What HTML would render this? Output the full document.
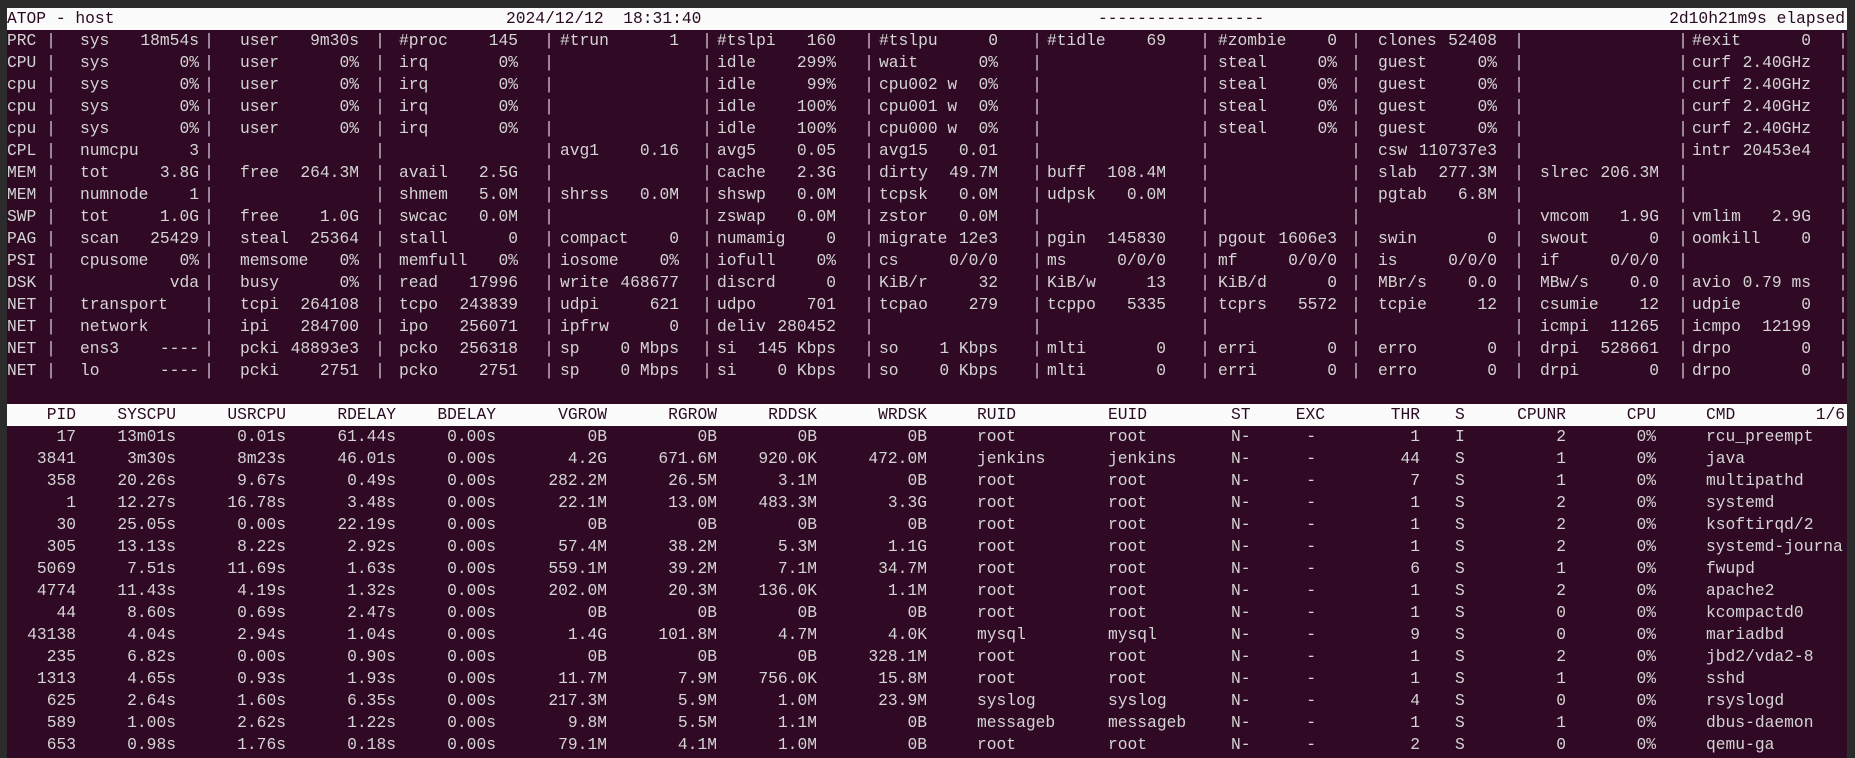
<!DOCTYPE html>
<html><head><meta charset="utf-8">
<style>
html,body{margin:0;padding:0}
body{width:1855px;height:758px;background:#2b2b2b;position:relative;overflow:hidden;font-family:"Liberation Mono","DejaVu Sans Mono",monospace;font-size:16.3px;color:#d4d4d4}
#term{position:absolute;left:7px;top:8px;width:1840px;height:750px;background:#300a24}
.hdr{position:absolute;left:7px;width:1840px;height:22px;background:#fbfbfb;color:#2a0a20;line-height:22px;white-space:pre}
.hdr span{position:absolute;top:0}
.row{position:absolute;left:0;width:1855px;height:22px;line-height:22px;white-space:pre}
.lab{position:absolute;left:7px}
.f{position:absolute;width:119px;display:flex;justify-content:space-between;top:0}
.f b,.f i{font-weight:normal;font-style:normal}
.f0{left:80px}.f1{left:240px}.f2{left:399px}.f3{left:560px}.f4{left:717px}.f5{left:879px}.f6{left:1047px}.f7{left:1218px}.f8{left:1378px}.f9{left:1540px}.f10{left:1692px}
.pipe{position:absolute;top:30px;line-height:22px;white-space:pre;color:#cdbfcb;width:10px;text-align:center}
table{position:absolute;left:7px;top:426px;border-collapse:collapse;table-layout:fixed;width:1848px}
td{padding:0;height:22px;line-height:22px;white-space:pre;overflow:hidden;text-align:right}
td.l{text-align:left}
</style></head><body>
<div id="term"></div>

<div class="hdr" style="top:8px"><span style="left:0">ATOP - host</span><span style="left:499px">2024/12/12  18:31:40</span><span style="left:1091px">-----------------</span><span style="right:2px">2d10h21m9s elapsed</span></div>

<div class="pipe" style="left:46px">|
|
|
|
|
|
|
|
|
|
|
|
|
|
|
|</div>
<div class="pipe" style="left:204px">|
|
|
|
|
|
|
|
|
|
|
|
|
|
|
|</div>
<div class="pipe" style="left:375px">|
|
|
|
|
|
|
|
|
|
|
|
|
|
|
|</div>
<div class="pipe" style="left:544px">|
|
|
|
|
|
|
|
|
|
|
|
|
|
|
|</div>
<div class="pipe" style="left:702px">|
|
|
|
|
|
|
|
|
|
|
|
|
|
|
|</div>
<div class="pipe" style="left:864px">|
|
|
|
|
|
|
|
|
|
|
|
|
|
|
|</div>
<div class="pipe" style="left:1032px">|
|
|
|
|
|
|
|
|
|
|
|
|
|
|
|</div>
<div class="pipe" style="left:1200px">|
|
|
|
|
|
|
|
|
|
|
|
|
|
|
|</div>
<div class="pipe" style="left:1351px">|
|
|
|
|
|
|
|
|
|
|
|
|
|
|
|</div>
<div class="pipe" style="left:1514px">|
|
|
|
|
|
|
|
|
|
|
|
|
|
|
|</div>
<div class="pipe" style="left:1678px">|
|
|
|
|
|
|
|
|
|
|
|
|
|
|
|</div>
<div class="pipe" style="left:1838px">|
|
|
|
|
|
|
|
|
|
|
|
|
|
|
|</div>

<div class="row" style="top:30px"><span class="lab">PRC</span><span class="f f0"><b>sys</b><i>18m54s</i></span><span class="f f1"><b>user</b><i>9m30s</i></span><span class="f f2"><b>#proc</b><i>145</i></span><span class="f f3"><b>#trun</b><i>1</i></span><span class="f f4"><b>#tslpi</b><i>160</i></span><span class="f f5"><b>#tslpu</b><i>0</i></span><span class="f f6"><b>#tidle</b><i>69</i></span><span class="f f7"><b>#zombie</b><i>0</i></span><span class="f f8"><b>clones</b><i>52408</i></span><span class="f f10"><b>#exit</b><i>0</i></span></div>
<div class="row" style="top:52px"><span class="lab">CPU</span><span class="f f0"><b>sys</b><i>0%</i></span><span class="f f1"><b>user</b><i>0%</i></span><span class="f f2"><b>irq</b><i>0%</i></span><span class="f f4"><b>idle</b><i>299%</i></span><span class="f f5"><b>wait</b><i>0%</i></span><span class="f f7"><b>steal</b><i>0%</i></span><span class="f f8"><b>guest</b><i>0%</i></span><span class="f f10"><b>curf</b><i>2.40GHz</i></span></div>
<div class="row" style="top:74px"><span class="lab">cpu</span><span class="f f0"><b>sys</b><i>0%</i></span><span class="f f1"><b>user</b><i>0%</i></span><span class="f f2"><b>irq</b><i>0%</i></span><span class="f f4"><b>idle</b><i>99%</i></span><span class="f f5"><b>cpu002 w</b><i>0%</i></span><span class="f f7"><b>steal</b><i>0%</i></span><span class="f f8"><b>guest</b><i>0%</i></span><span class="f f10"><b>curf</b><i>2.40GHz</i></span></div>
<div class="row" style="top:96px"><span class="lab">cpu</span><span class="f f0"><b>sys</b><i>0%</i></span><span class="f f1"><b>user</b><i>0%</i></span><span class="f f2"><b>irq</b><i>0%</i></span><span class="f f4"><b>idle</b><i>100%</i></span><span class="f f5"><b>cpu001 w</b><i>0%</i></span><span class="f f7"><b>steal</b><i>0%</i></span><span class="f f8"><b>guest</b><i>0%</i></span><span class="f f10"><b>curf</b><i>2.40GHz</i></span></div>
<div class="row" style="top:118px"><span class="lab">cpu</span><span class="f f0"><b>sys</b><i>0%</i></span><span class="f f1"><b>user</b><i>0%</i></span><span class="f f2"><b>irq</b><i>0%</i></span><span class="f f4"><b>idle</b><i>100%</i></span><span class="f f5"><b>cpu000 w</b><i>0%</i></span><span class="f f7"><b>steal</b><i>0%</i></span><span class="f f8"><b>guest</b><i>0%</i></span><span class="f f10"><b>curf</b><i>2.40GHz</i></span></div>
<div class="row" style="top:140px"><span class="lab">CPL</span><span class="f f0"><b>numcpu</b><i>3</i></span><span class="f f3"><b>avg1</b><i>0.16</i></span><span class="f f4"><b>avg5</b><i>0.05</i></span><span class="f f5"><b>avg15</b><i>0.01</i></span><span class="f f8"><b>csw</b><i>110737e3</i></span><span class="f f10"><b>intr</b><i>20453e4</i></span></div>
<div class="row" style="top:162px"><span class="lab">MEM</span><span class="f f0"><b>tot</b><i>3.8G</i></span><span class="f f1"><b>free</b><i>264.3M</i></span><span class="f f2"><b>avail</b><i>2.5G</i></span><span class="f f4"><b>cache</b><i>2.3G</i></span><span class="f f5"><b>dirty</b><i>49.7M</i></span><span class="f f6"><b>buff</b><i>108.4M</i></span><span class="f f8"><b>slab</b><i>277.3M</i></span><span class="f f9"><b>slrec</b><i>206.3M</i></span></div>
<div class="row" style="top:184px"><span class="lab">MEM</span><span class="f f0"><b>numnode</b><i>1</i></span><span class="f f2"><b>shmem</b><i>5.0M</i></span><span class="f f3"><b>shrss</b><i>0.0M</i></span><span class="f f4"><b>shswp</b><i>0.0M</i></span><span class="f f5"><b>tcpsk</b><i>0.0M</i></span><span class="f f6"><b>udpsk</b><i>0.0M</i></span><span class="f f8"><b>pgtab</b><i>6.8M</i></span></div>
<div class="row" style="top:206px"><span class="lab">SWP</span><span class="f f0"><b>tot</b><i>1.0G</i></span><span class="f f1"><b>free</b><i>1.0G</i></span><span class="f f2"><b>swcac</b><i>0.0M</i></span><span class="f f4"><b>zswap</b><i>0.0M</i></span><span class="f f5"><b>zstor</b><i>0.0M</i></span><span class="f f9"><b>vmcom</b><i>1.9G</i></span><span class="f f10"><b>vmlim</b><i>2.9G</i></span></div>
<div class="row" style="top:228px"><span class="lab">PAG</span><span class="f f0"><b>scan</b><i>25429</i></span><span class="f f1"><b>steal</b><i>25364</i></span><span class="f f2"><b>stall</b><i>0</i></span><span class="f f3"><b>compact</b><i>0</i></span><span class="f f4"><b>numamig</b><i>0</i></span><span class="f f5"><b>migrate</b><i>12e3</i></span><span class="f f6"><b>pgin</b><i>145830</i></span><span class="f f7"><b>pgout</b><i>1606e3</i></span><span class="f f8"><b>swin</b><i>0</i></span><span class="f f9"><b>swout</b><i>0</i></span><span class="f f10"><b>oomkill</b><i>0</i></span></div>
<div class="row" style="top:250px"><span class="lab">PSI</span><span class="f f0"><b>cpusome</b><i>0%</i></span><span class="f f1"><b>memsome</b><i>0%</i></span><span class="f f2"><b>memfull</b><i>0%</i></span><span class="f f3"><b>iosome</b><i>0%</i></span><span class="f f4"><b>iofull</b><i>0%</i></span><span class="f f5"><b>cs</b><i>0/0/0</i></span><span class="f f6"><b>ms</b><i>0/0/0</i></span><span class="f f7"><b>mf</b><i>0/0/0</i></span><span class="f f8"><b>is</b><i>0/0/0</i></span><span class="f f9"><b>if</b><i>0/0/0</i></span></div>
<div class="row" style="top:272px"><span class="lab">DSK</span><span class="f f0"><b></b><i>vda</i></span><span class="f f1"><b>busy</b><i>0%</i></span><span class="f f2"><b>read</b><i>17996</i></span><span class="f f3"><b>write</b><i>468677</i></span><span class="f f4"><b>discrd</b><i>0</i></span><span class="f f5"><b>KiB/r</b><i>32</i></span><span class="f f6"><b>KiB/w</b><i>13</i></span><span class="f f7"><b>KiB/d</b><i>0</i></span><span class="f f8"><b>MBr/s</b><i>0.0</i></span><span class="f f9"><b>MBw/s</b><i>0.0</i></span><span class="f f10"><b>avio</b><i>0.79 ms</i></span></div>
<div class="row" style="top:294px"><span class="lab">NET</span><span class="f f0"><b>transport</b><i></i></span><span class="f f1"><b>tcpi</b><i>264108</i></span><span class="f f2"><b>tcpo</b><i>243839</i></span><span class="f f3"><b>udpi</b><i>621</i></span><span class="f f4"><b>udpo</b><i>701</i></span><span class="f f5"><b>tcpao</b><i>279</i></span><span class="f f6"><b>tcppo</b><i>5335</i></span><span class="f f7"><b>tcprs</b><i>5572</i></span><span class="f f8"><b>tcpie</b><i>12</i></span><span class="f f9"><b>csumie</b><i>12</i></span><span class="f f10"><b>udpie</b><i>0</i></span></div>
<div class="row" style="top:316px"><span class="lab">NET</span><span class="f f0"><b>network</b><i></i></span><span class="f f1"><b>ipi</b><i>284700</i></span><span class="f f2"><b>ipo</b><i>256071</i></span><span class="f f3"><b>ipfrw</b><i>0</i></span><span class="f f4"><b>deliv</b><i>280452</i></span><span class="f f9"><b>icmpi</b><i>11265</i></span><span class="f f10"><b>icmpo</b><i>12199</i></span></div>
<div class="row" style="top:338px"><span class="lab">NET</span><span class="f f0"><b>ens3</b><i>----</i></span><span class="f f1"><b>pcki</b><i>48893e3</i></span><span class="f f2"><b>pcko</b><i>256318</i></span><span class="f f3"><b>sp</b><i>0 Mbps</i></span><span class="f f4"><b>si</b><i>145 Kbps</i></span><span class="f f5"><b>so</b><i>1 Kbps</i></span><span class="f f6"><b>mlti</b><i>0</i></span><span class="f f7"><b>erri</b><i>0</i></span><span class="f f8"><b>erro</b><i>0</i></span><span class="f f9"><b>drpi</b><i>528661</i></span><span class="f f10"><b>drpo</b><i>0</i></span></div>
<div class="row" style="top:360px"><span class="lab">NET</span><span class="f f0"><b>lo</b><i>----</i></span><span class="f f1"><b>pcki</b><i>2751</i></span><span class="f f2"><b>pcko</b><i>2751</i></span><span class="f f3"><b>sp</b><i>0 Mbps</i></span><span class="f f4"><b>si</b><i>0 Kbps</i></span><span class="f f5"><b>so</b><i>0 Kbps</i></span><span class="f f6"><b>mlti</b><i>0</i></span><span class="f f7"><b>erri</b><i>0</i></span><span class="f f8"><b>erro</b><i>0</i></span><span class="f f9"><b>drpi</b><i>0</i></span><span class="f f10"><b>drpo</b><i>0</i></span></div>

<div class="hdr" style="top:404px"></div>
<table style="top:404px;color:#2a0a20">
<colgroup><col style="width:69px"><col style="width:100px"><col style="width:110px"><col style="width:110px"><col style="width:100px"><col style="width:111px"><col style="width:110px"><col style="width:100px"><col style="width:110px"><col style="width:181px"><col style="width:123px"><col style="width:39px"><col style="width:55px"><col style="width:95px"><col style="width:80px"><col style="width:66px"><col style="width:90px"><col style="width:199px"></colgroup>
<tr><td>PID</td><td>SYSCPU</td><td>USRCPU</td><td>RDELAY</td><td>BDELAY</td><td>VGROW</td><td>RGROW</td><td>RDDSK</td><td>WRDSK</td><td class="l" style="text-indent:50px">RUID</td><td class="l">EUID</td><td class="l">ST</td><td>EXC</td><td>THR</td><td class="l" style="text-indent:35px">S</td><td>CPUNR</td><td>CPU</td><td class="l" style="text-indent:50px">CMD</td></tr>
</table>
<div style="position:absolute;top:404px;right:10px;line-height:22px;color:#2a0a20">1/6</div>

<table>
<colgroup><col style="width:69px"><col style="width:100px"><col style="width:110px"><col style="width:110px"><col style="width:100px"><col style="width:111px"><col style="width:110px"><col style="width:100px"><col style="width:110px"><col style="width:181px"><col style="width:123px"><col style="width:39px"><col style="width:46px"><col style="width:104px"><col style="width:80px"><col style="width:66px"><col style="width:90px"><col style="width:199px"></colgroup>
<tr><td>17</td><td>13m01s</td><td>0.01s</td><td>61.44s</td><td>0.00s</td><td>0B</td><td>0B</td><td>0B</td><td>0B</td><td class="l" style="text-indent:50px">root</td><td class="l">root</td><td class="l">N-</td><td>-</td><td>1</td><td class="l" style="text-indent:35px">I</td><td>2</td><td>0%</td><td class="l" style="text-indent:50px">rcu_preempt</td></tr>
<tr><td>3841</td><td>3m30s</td><td>8m23s</td><td>46.01s</td><td>0.00s</td><td>4.2G</td><td>671.6M</td><td>920.0K</td><td>472.0M</td><td class="l" style="text-indent:50px">jenkins</td><td class="l">jenkins</td><td class="l">N-</td><td>-</td><td>44</td><td class="l" style="text-indent:35px">S</td><td>1</td><td>0%</td><td class="l" style="text-indent:50px">java</td></tr>
<tr><td>358</td><td>20.26s</td><td>9.67s</td><td>0.49s</td><td>0.00s</td><td>282.2M</td><td>26.5M</td><td>3.1M</td><td>0B</td><td class="l" style="text-indent:50px">root</td><td class="l">root</td><td class="l">N-</td><td>-</td><td>7</td><td class="l" style="text-indent:35px">S</td><td>1</td><td>0%</td><td class="l" style="text-indent:50px">multipathd</td></tr>
<tr><td>1</td><td>12.27s</td><td>16.78s</td><td>3.48s</td><td>0.00s</td><td>22.1M</td><td>13.0M</td><td>483.3M</td><td>3.3G</td><td class="l" style="text-indent:50px">root</td><td class="l">root</td><td class="l">N-</td><td>-</td><td>1</td><td class="l" style="text-indent:35px">S</td><td>2</td><td>0%</td><td class="l" style="text-indent:50px">systemd</td></tr>
<tr><td>30</td><td>25.05s</td><td>0.00s</td><td>22.19s</td><td>0.00s</td><td>0B</td><td>0B</td><td>0B</td><td>0B</td><td class="l" style="text-indent:50px">root</td><td class="l">root</td><td class="l">N-</td><td>-</td><td>1</td><td class="l" style="text-indent:35px">S</td><td>2</td><td>0%</td><td class="l" style="text-indent:50px">ksoftirqd/2</td></tr>
<tr><td>305</td><td>13.13s</td><td>8.22s</td><td>2.92s</td><td>0.00s</td><td>57.4M</td><td>38.2M</td><td>5.3M</td><td>1.1G</td><td class="l" style="text-indent:50px">root</td><td class="l">root</td><td class="l">N-</td><td>-</td><td>1</td><td class="l" style="text-indent:35px">S</td><td>2</td><td>0%</td><td class="l" style="text-indent:50px">systemd-journa</td></tr>
<tr><td>5069</td><td>7.51s</td><td>11.69s</td><td>1.63s</td><td>0.00s</td><td>559.1M</td><td>39.2M</td><td>7.1M</td><td>34.7M</td><td class="l" style="text-indent:50px">root</td><td class="l">root</td><td class="l">N-</td><td>-</td><td>6</td><td class="l" style="text-indent:35px">S</td><td>1</td><td>0%</td><td class="l" style="text-indent:50px">fwupd</td></tr>
<tr><td>4774</td><td>11.43s</td><td>4.19s</td><td>1.32s</td><td>0.00s</td><td>202.0M</td><td>20.3M</td><td>136.0K</td><td>1.1M</td><td class="l" style="text-indent:50px">root</td><td class="l">root</td><td class="l">N-</td><td>-</td><td>1</td><td class="l" style="text-indent:35px">S</td><td>2</td><td>0%</td><td class="l" style="text-indent:50px">apache2</td></tr>
<tr><td>44</td><td>8.60s</td><td>0.69s</td><td>2.47s</td><td>0.00s</td><td>0B</td><td>0B</td><td>0B</td><td>0B</td><td class="l" style="text-indent:50px">root</td><td class="l">root</td><td class="l">N-</td><td>-</td><td>1</td><td class="l" style="text-indent:35px">S</td><td>0</td><td>0%</td><td class="l" style="text-indent:50px">kcompactd0</td></tr>
<tr><td>43138</td><td>4.04s</td><td>2.94s</td><td>1.04s</td><td>0.00s</td><td>1.4G</td><td>101.8M</td><td>4.7M</td><td>4.0K</td><td class="l" style="text-indent:50px">mysql</td><td class="l">mysql</td><td class="l">N-</td><td>-</td><td>9</td><td class="l" style="text-indent:35px">S</td><td>0</td><td>0%</td><td class="l" style="text-indent:50px">mariadbd</td></tr>
<tr><td>235</td><td>6.82s</td><td>0.00s</td><td>0.90s</td><td>0.00s</td><td>0B</td><td>0B</td><td>0B</td><td>328.1M</td><td class="l" style="text-indent:50px">root</td><td class="l">root</td><td class="l">N-</td><td>-</td><td>1</td><td class="l" style="text-indent:35px">S</td><td>2</td><td>0%</td><td class="l" style="text-indent:50px">jbd2/vda2-8</td></tr>
<tr><td>1313</td><td>4.65s</td><td>0.93s</td><td>1.93s</td><td>0.00s</td><td>11.7M</td><td>7.9M</td><td>756.0K</td><td>15.8M</td><td class="l" style="text-indent:50px">root</td><td class="l">root</td><td class="l">N-</td><td>-</td><td>1</td><td class="l" style="text-indent:35px">S</td><td>1</td><td>0%</td><td class="l" style="text-indent:50px">sshd</td></tr>
<tr><td>625</td><td>2.64s</td><td>1.60s</td><td>6.35s</td><td>0.00s</td><td>217.3M</td><td>5.9M</td><td>1.0M</td><td>23.9M</td><td class="l" style="text-indent:50px">syslog</td><td class="l">syslog</td><td class="l">N-</td><td>-</td><td>4</td><td class="l" style="text-indent:35px">S</td><td>0</td><td>0%</td><td class="l" style="text-indent:50px">rsyslogd</td></tr>
<tr><td>589</td><td>1.00s</td><td>2.62s</td><td>1.22s</td><td>0.00s</td><td>9.8M</td><td>5.5M</td><td>1.1M</td><td>0B</td><td class="l" style="text-indent:50px">messageb</td><td class="l">messageb</td><td class="l">N-</td><td>-</td><td>1</td><td class="l" style="text-indent:35px">S</td><td>1</td><td>0%</td><td class="l" style="text-indent:50px">dbus-daemon</td></tr>
<tr><td>653</td><td>0.98s</td><td>1.76s</td><td>0.18s</td><td>0.00s</td><td>79.1M</td><td>4.1M</td><td>1.0M</td><td>0B</td><td class="l" style="text-indent:50px">root</td><td class="l">root</td><td class="l">N-</td><td>-</td><td>2</td><td class="l" style="text-indent:35px">S</td><td>0</td><td>0%</td><td class="l" style="text-indent:50px">qemu-ga</td></tr>
</table>
</body></html>
